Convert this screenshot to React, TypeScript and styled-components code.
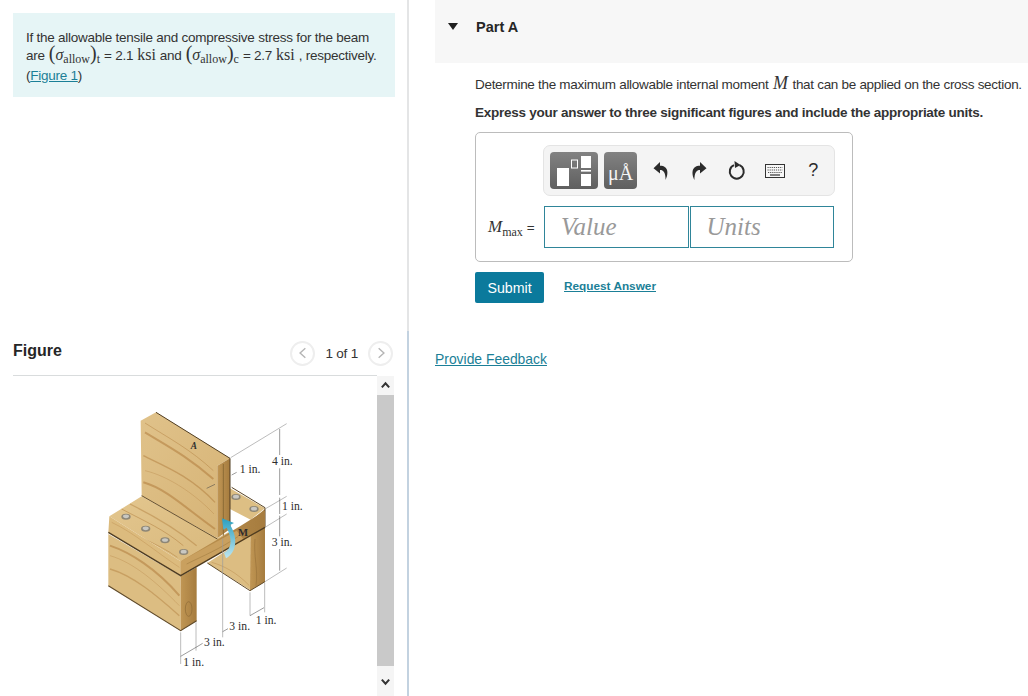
import React from "react";
import styled, { createGlobalStyle } from "styled-components";

const Global = createGlobalStyle`
  html, body { margin: 0; padding: 0; background: #fff; }
  body { font-family: "Liberation Sans", Arial, sans-serif; color: #333; overflow: hidden; }
`;

const Page = styled.div`
  display: flex;
  width: 1028px;
  height: 696px;
  overflow: hidden;
`;
const LeftColumn = styled.aside`
  width: 407px;
  flex: none;
  display: flex;
  flex-direction: column;
  padding: 13px 13px 0;
  box-sizing: border-box;
`;
const Divider = styled.div`
  width: 2px;
  flex: none;
  display: flex;
  flex-direction: column;
`;
const DividerTop = styled.div`
  height: 331px;
  background: #e4e5e6;
`;
const DividerBottom = styled.div`
  flex: 1;
  background: #c3d2e0;
`;
const Callout = styled.div`
  width: 382px;
  height: 84px;
  box-sizing: border-box;
  background: #e6f5f6;
  padding: 16px 13px;
  font-size: 13.5px;
  letter-spacing: -0.25px;
  white-space: nowrap;
`;
const CalloutLine = styled.div<{ $gap?: number }>`
  height: 18px;
  line-height: 18px;
  margin-top: ${(p) => p.$gap ?? 0}px;
`;
const Math = styled.span`
  font-family: "Liberation Serif", serif;
  font-size: 16px;
  line-height: 0;
  letter-spacing: 0;
  margin: 0 0.5px;
`;
const Paren = styled.span`
  font-size: 20px;
  font-weight: 400;
  line-height: 0;
`;
const Sub = styled.sub`
  font-size: 12px;
  line-height: 0;
  vertical-align: -3px;
`;
const TextLink = styled.a`
  color: #1b7f97;
  text-decoration: underline;
`;
const FigureHeader = styled.header`
  margin-top: 241px;
  height: 38px;
  width: 364px;
  box-sizing: border-box;
  display: flex;
  align-items: center;
  border-bottom: 1px solid #d9dcdd;
  padding-bottom: 12px;
`;
const FigureTitle = styled.h2`
  margin: 0;
  flex: 1;
  font-size: 16px;
  font-weight: 700;
  color: #262626;
`;
const Pager = styled.div`
  display: flex;
  align-items: center;
  gap: 10px;
  font-size: 13.5px;
  letter-spacing: -0.2px;
  color: #333;
  margin-right: -16px;
  margin-top: 5px;
`;
const PageButton = styled.span`
  width: 25px;
  height: 25px;
  box-sizing: border-box;
  border: 2px solid #eeeeee;
  border-radius: 50%;
  display: flex;
  align-items: center;
  justify-content: center;
  color: #b5b5b5;
`;
const FigureBody = styled.div`
  flex: 1;
  display: flex;
  min-height: 0;
  width: 381px;
`;
const FigureCanvas = styled.div`
  width: 364px;
  flex: none;
  padding: 23px 0 0 77px;
  box-sizing: border-box;
`;
const Scrollbar = styled.div`
  width: 17px;
  flex: none;
  display: flex;
  flex-direction: column;
`;
const ScrollEnd = styled.div<{ $h: number }>`
  height: ${(p) => p.$h}px;
  flex: none;
  display: flex;
  align-items: center;
  justify-content: center;
  background: #f5f5f5;
  color: #333;
`;
const ScrollThumb = styled.div`
  flex: 1;
  background: #c9c9c9;
`;

const RightColumn = styled.main`
  flex: 1;
  min-width: 0;
  padding-left: 26px;
  font-size: 13.5px;
`;
const PartHeader = styled.div`
  height: 63px;
  background: #f7f7f7;
  display: flex;
  align-items: flex-start;
  padding: 18px 0 0 13px;
  box-sizing: border-box;
  gap: 18px;
`;
const Caret = styled.span`
  width: 0;
  height: 0;
  margin-top: 5px;
  border-left: 5.5px solid transparent;
  border-right: 5.5px solid transparent;
  border-top: 7px solid #1f1f1f;
`;
const PartTitle = styled.h3`
  margin: 0;
  font-size: 14.5px;
  line-height: 18px;
  font-weight: 700;
  color: #262626;
`;
const PartBody = styled.section`
  padding: 13px 0 0 40px;
`;
const Prompt = styled.p`
  margin: 0;
  height: 28px;
  line-height: 18px;
  white-space: nowrap;
  letter-spacing: -0.3px;
`;
const PromptStrong = styled(Prompt)`
  font-weight: 700;
  color: #333;
  letter-spacing: -0.26px;
  height: 28px;
`;
const MathItalic = styled.i`
  font-family: "Liberation Serif", serif;
  font-size: 18px;
  line-height: 0;
  letter-spacing: 0;
  margin: 0 1px;
`;
const AnswerBox = styled.div`
  width: 378px;
  height: 130px;
  box-sizing: border-box;
  border: 1px solid #bcbcbc;
  border-radius: 5px;
  padding: 12px 17px 0 12px;
  display: flex;
  flex-direction: column;
  align-items: flex-end;
`;
const Toolbar = styled.div`
  width: 292px;
  height: 51px;
  box-sizing: border-box;
  background: #f4f4f4;
  border: 1px solid #e4e4e4;
  border-radius: 7px;
  display: flex;
  align-items: center;
  padding: 0 6px;
`;
const TemplateButton = styled.span<{ $w: number }>`
  width: ${(p) => p.$w}px;
  height: 37px;
  flex: none;
  margin-right: 6px;
  border-radius: 4px;
  background: linear-gradient(#828282, #5f5f5f);
  display: flex;
  align-items: center;
  justify-content: center;
  color: #f4f4f4;
`;
const UnitGlyph = styled.span`
  font-family: "Liberation Serif", serif;
  font-size: 20px;
  letter-spacing: 0;
  margin-top: 5px;
`;
const ToolIcon = styled.span`
  width: 38.2px;
  flex: none;
  display: flex;
  align-items: center;
  justify-content: center;
  color: #2b2b2b;
  font-size: 18px;
  ${TemplateButton} + & {
    margin-left: -1.5px;
  }
`;
const AnswerRow = styled.div`
  width: 100%;
  display: flex;
  align-items: center;
  margin-top: 10px;
`;
const AnswerLabel = styled.label`
  width: 56px;
  flex: none;
  font-size: 13.5px;
  white-space: nowrap;
`;
const LabelM = styled.i`
  font-family: "Liberation Serif", serif;
  font-size: 17px;
`;
const LabelSub = styled.sub`
  font-family: "Liberation Serif", serif;
  font-size: 12px;
  line-height: 0;
  margin-right: 4px;
`;
const Field = styled.div`
  width: 144.5px;
  height: 42px;
  flex: none;
  box-sizing: border-box;
  border: 1px solid #2f8599;
  margin-right: 1px;
  padding-left: 16px;
  display: flex;
  align-items: center;
  font-family: "Liberation Serif", serif;
  font-style: italic;
  font-size: 25px;
  color: #999;
`;
const Actions = styled.div`
  display: flex;
  align-items: center;
  margin-top: 10px;
  gap: 20px;
`;
const Submit = styled.button`
  width: 69px;
  height: 31px;
  border: 0;
  border-radius: 2px;
  padding: 0;
  background: #0b7a9c;
  color: #fff;
  font: 14.2px "Liberation Sans", Arial, sans-serif;
`;
const RequestLink = styled(TextLink)`
  font-size: 11.8px;
  line-height: 13px;
  margin-top: -2px;
  font-weight: 700;
`;
const Feedback = styled(TextLink)`
  display: inline-block;
  margin-top: 47px;
  font-size: 13.9px;
  line-height: 18px;
`;

const Chevron = ({ dir, size = 14, w = 1.2 }: { dir: "l" | "r" | "u" | "d"; size?: number; w?: number }) => {
  const d = { l: "M8 2 3.5 6 8 10", r: "M4 2 8.5 6 4 10", u: "M2 8 6 3.5 10 8", d: "M2 4 6 8.5 10 4" }[dir];
  return (
    <svg width={size} height={size} viewBox="0 0 12 12" fill="none" stroke="currentColor" strokeWidth={w}>
      <path d={d} />
    </svg>
  );
};

const Grain = ({ d, o = 0.5, w = 3, c = "#b07c3c" }: { d: string; o?: number; w?: number; c?: string }) => (
  <path d={d} fill="none" stroke={c} strokeWidth={w} opacity={o} />
);

const Bolt = ({ x, y }: { x: number; y: number }) => (
  <g>
    <ellipse cx={x} cy={y} rx={14} ry={9} fill="#8d8676" />
    <ellipse cx={x} cy={y - 1} rx={9} ry={5.5} fill="#c9c8c2" />
  </g>
);

const BeamFigure = () => (
  <svg width={230} height={290} viewBox="0 0 690 870">
    <defs>
      <linearGradient id="woodA" x1="0" y1="0" x2="1" y2="1">
        <stop offset="0" stopColor="#e0c28a" />
        <stop offset="1" stopColor="#d6b375" />
      </linearGradient>
      <linearGradient id="woodB" x1="0" y1="0" x2="1" y2="1">
        <stop offset="0" stopColor="#e3c68e" />
        <stop offset="1" stopColor="#d8b87c" />
      </linearGradient>
      <linearGradient id="end" x1="0" y1="0" x2="1" y2="0">
        <stop offset="0" stopColor="#c09654" />
        <stop offset="1" stopColor="#a67c3f" />
      </linearGradient>
      <linearGradient id="arrow" x1="0" y1="1" x2="0" y2="0">
        <stop offset="0" stopColor="#bfe6f0" />
        <stop offset="1" stopColor="#2a9fc0" />
      </linearGradient>
      <filter id="soft"><feGaussianBlur stdDeviation="1.5" /></filter>
    </defs>
    <g filter="url(#soft)">
      {/* far leg */}
      <polygon points="352,492 432,440 482,400 482,574 420,535" fill="#dcbd82" />
      <Grain d="M365,490 C400,500 440,520 478,560" o={0.35} />
      <polygon points="482,365 525,330 525,548 480,575" fill="url(#end)" />
      <Grain d="M495,420 C490,470 505,510 498,560" o={0.5} c="#8f6a33" />
      <path d="M352,492 L480,575 L525,548" fill="none" stroke="#5f4a2a" strokeWidth={3} />
      <polygon points="420,268 525,328 482,362 420,330" fill="#ddbf84" />
      <path d="M425,265 L525,326 L525,385" fill="none" stroke="#5a4526" strokeWidth={3} />
      {/* flange top */}
      <polygon points="58,352 155,292 382,418 415,400 440,420 272,487" fill="url(#woodB)" />
      <Grain d="M95,330 C170,370 220,390 280,440" />
      <Grain d="M120,315 C190,350 260,390 320,440" o={0.45} w={4} />
      <Grain d="M70,375 C130,410 200,430 262,475" o={0.45} />
      {/* flange side */}
      <polygon points="58,352 272,487 272,530 55,400" fill="#dcbb7e" />
      <Grain d="M65,370 C130,400 200,460 268,505" o={0.3} />
      <polygon points="272,487 450,382 525,335 525,385 272,530" fill="url(#end)" />
      <polygon points="272,487 440,395 460,420 272,530" fill="#c9a05e" />
      <Grain d="M290,495 C340,470 390,450 445,412" o={0.45} c="#94703a" />
      {/* web */}
      <polygon points="152,65 198,40 420,178 382,200 382,418 155,292" fill="url(#woodA)" />
      <Grain d="M165,72 C240,120 300,150 370,215" o={0.45} />
      <Grain d="M165,100 C230,140 290,170 370,240" o={0.55} w={6} />
      <Grain d="M160,170 C220,200 300,230 375,310" o={0.5} w={4} />
      <Grain d="M160,250 C230,270 290,330 375,390" o={0.55} w={6} />
      <Grain d="M165,215 C230,230 310,280 372,345" o={0.3} />
      <polygon points="382,200 420,178 420,390 382,418" fill="url(#end)" />
      <path d="M400,195 L400,410" stroke="#8c6a35" strokeWidth={3} />
      <path d="M198,40 L420,178 L420,390" fill="none" stroke="#4f3c20" strokeWidth={3} />
      <path d="M155,290 L382,420" fill="none" stroke="#4f3c20" strokeWidth={2.5} />
      {/* lower leg */}
      <polygon points="55,405 272,532 272,695 55,560" fill="#dcbd82" />
      <Grain d="M60,440 C120,460 200,510 268,590" o={0.55} w={6} />
      <Grain d="M60,510 C130,530 200,590 268,650" o={0.45} w={4} />
      <Grain d="M60,470 C130,490 200,550 268,620" o={0.3} />
      <polygon points="272,532 320,505 320,665 272,695" fill="url(#end)" />
      <ellipse cx={296} cy={630} rx={10} ry={22} fill="none" stroke="#8c6a35" strokeWidth={2} />
      <path d="M55,400 L272,530 L525,385" fill="none" stroke="#4f3c20" strokeWidth={4} />
      <path d="M55,560 L272,695 L320,665" fill="none" stroke="#5f4a2a" strokeWidth={3.5} />
    </g>
    <Bolt x={108} y={353} />
    <Bolt x={167} y={389} />
    <Bolt x={225} y={424} />
    <Bolt x={281} y={459} />
    <Bolt x={438} y={294} />
    <Bolt x={492} y={330} />
    {/* moment arrow */}
    <path d="M408,478 C440,462 445,415 420,378 L432,372 L396,358 L400,392 L410,386 C428,420 425,450 402,462 Z" fill="url(#arrow)" />
    {/* dimensions */}
    <g fill="none" stroke="#9a9a9a" strokeWidth={2}>
      <path d="M422,176 L590,74" />
      <path d="M525,330 L590,292" />
      <path d="M525,385 L590,345" />
      <path d="M525,548 L590,507" />
      <path d="M398,418 L398,715" />
      <path d="M272,700 L272,795" />
      <path d="M318,670 L318,755" />
      <path d="M480,580 L480,650" />
      <path d="M524,552 L524,640" />
    </g>
    <g fill="none" stroke="#444" strokeWidth={1.6}>
      <path d="M569,90 L569,168 M569,208 L569,288" />
      <path d="M569,296 L569,345" />
      <path d="M569,350 L569,412 M569,450 L569,515" />
      <path d="M272,772 L318,745 L338,733 M398,698 L414,689 M480,650 L522,626" />
      <path d="M350,268 L375,256" />
      <path d="M425,228 L440,220" />
    </g>
    <g fontFamily='"Liberation Serif", serif' fontSize={35} fill="#2d2d2d">
      <text x={546} y={198}>4 in.</text>
      <text x={449} y={222}>1 in.</text>
      <text x={576} y={333}>1 in.</text>
      <text x={545} y={441}>3 in.</text>
      <text x={418} y={692}>3 in.</text>
      <text x={497} y={675}>1 in.</text>
      <text x={342} y={741}>3 in.</text>
      <text x={280} y={802}>1 in.</text>
      <text x={444} y={410} fontWeight={700} fontSize={32}>M</text>
      <text x={302} y={151} fontWeight={700} fontStyle="italic" fontSize={28}>A</text>
    </g>
  </svg>
);

const TemplateIcon = () => (
  <svg width={36} height={32} viewBox="0 0 36 32" fill="#fff">
    <rect x="1" y="13" width="12" height="18" />
    <rect x="15.5" y="5" width="6" height="8" fill="none" stroke="#fff" strokeWidth="1" />
    <rect x="25" y="1" width="10" height="12" />
    <rect x="25" y="15" width="10" height="1.6" />
    <rect x="25" y="19" width="10" height="12" />
  </svg>
);
const Undo = () => (
  <svg width={16} height={20} viewBox="0 0 16 20" fill="currentColor">
    <path d="M7 1 0.5 7.2 7 12.5V9C10.5 9 12.6 11.5 12.6 19 15.6 13 15.8 4.8 7 4.8Z" />
  </svg>
);
const Redo = () => (
  <svg width={16} height={20} viewBox="0 0 16 20" fill="currentColor">
    <path d="M9 1 15.5 7.2 9 12.5V9C5.5 9 3.4 11.5 3.4 19 .4 13 .2 4.8 9 4.8Z" />
  </svg>
);
const Reset = () => (
  <svg width={18} height={21} viewBox="0 0 18 21" fill="none" stroke="currentColor" strokeWidth="2">
    <path d="M11.5 5.2A7 7 0 1 1 6 5.2" />
    <path d="M6.5 1 12.5 5 7 8Z" fill="currentColor" stroke="none" />
  </svg>
);
const Keyboard = () => (
  <svg width={20} height={14} viewBox="0 0 20 14">
    <rect x=".5" y=".5" width="19" height="13" fill="#f7f7f7" stroke="#333" strokeWidth="1" />
    <path d="M2.5 3.5h15M2.5 6h15" stroke="#555" strokeWidth="1.2" strokeDasharray="1.2 .9" />
    <path d="M3 8.5h14" stroke="#555" strokeWidth="1.2" strokeDasharray="1.2 .9" />
    <path d="M5 11h10" stroke="#333" strokeWidth="1.2" />
  </svg>
);

export default function App() {
  return (
    <Page>
      <Global />
      <LeftColumn>
        <Callout>
          <CalloutLine>If the allowable tensile and compressive stress for the beam</CalloutLine>
          <CalloutLine>
            are <Math><Paren>(</Paren><i>σ</i><Sub>allow</Sub><Paren>)</Paren><Sub>t</Sub></Math> = 2.1 <Math>ksi</Math> and{" "}
            <Math><Paren>(</Paren><i>σ</i><Sub>allow</Sub><Paren>)</Paren><Sub>c</Sub></Math> = 2.7 <Math>ksi</Math> , respectively.
          </CalloutLine>
          <CalloutLine $gap={2}>
            (<TextLink>Figure 1</TextLink>)
          </CalloutLine>
        </Callout>
        <FigureHeader>
          <FigureTitle>Figure</FigureTitle>
          <Pager>
            <PageButton><Chevron dir="l" /></PageButton>
            <span>1 of 1</span>
            <PageButton><Chevron dir="r" /></PageButton>
          </Pager>
        </FigureHeader>
        <FigureBody>
          <FigureCanvas>
            <BeamFigure />
          </FigureCanvas>
          <Scrollbar>
            <ScrollEnd $h={19}><Chevron dir="u" size={11} w={2.2} /></ScrollEnd>
            <ScrollThumb />
            <ScrollEnd $h={30}><Chevron dir="d" size={11} w={2.2} /></ScrollEnd>
          </Scrollbar>
        </FigureBody>
      </LeftColumn>
      <Divider>
        <DividerTop />
        <DividerBottom />
      </Divider>
      <RightColumn>
        <PartHeader>
          <Caret />
          <PartTitle>Part A</PartTitle>
        </PartHeader>
        <PartBody>
          <Prompt>
            Determine the maximum allowable internal moment <MathItalic>M</MathItalic> that can be applied on the cross section.
          </Prompt>
          <PromptStrong>Express your answer to three significant figures and include the appropriate units.</PromptStrong>
          <AnswerBox>
            <Toolbar>
              <TemplateButton $w={48}><TemplateIcon /></TemplateButton>
              <TemplateButton $w={33}><UnitGlyph>μÅ</UnitGlyph></TemplateButton>
              <ToolIcon><Undo /></ToolIcon>
              <ToolIcon><Redo /></ToolIcon>
              <ToolIcon><Reset /></ToolIcon>
              <ToolIcon><Keyboard /></ToolIcon>
              <ToolIcon>?</ToolIcon>
            </Toolbar>
            <AnswerRow>
              <AnswerLabel>
                <LabelM>M</LabelM><LabelSub>max</LabelSub>=
              </AnswerLabel>
              <Field>Value</Field>
              <Field>Units</Field>
            </AnswerRow>
          </AnswerBox>
          <Actions>
            <Submit>Submit</Submit>
            <RequestLink>Request Answer</RequestLink>
          </Actions>
        </PartBody>
        <Feedback>Provide Feedback</Feedback>
      </RightColumn>
    </Page>
  );
}
